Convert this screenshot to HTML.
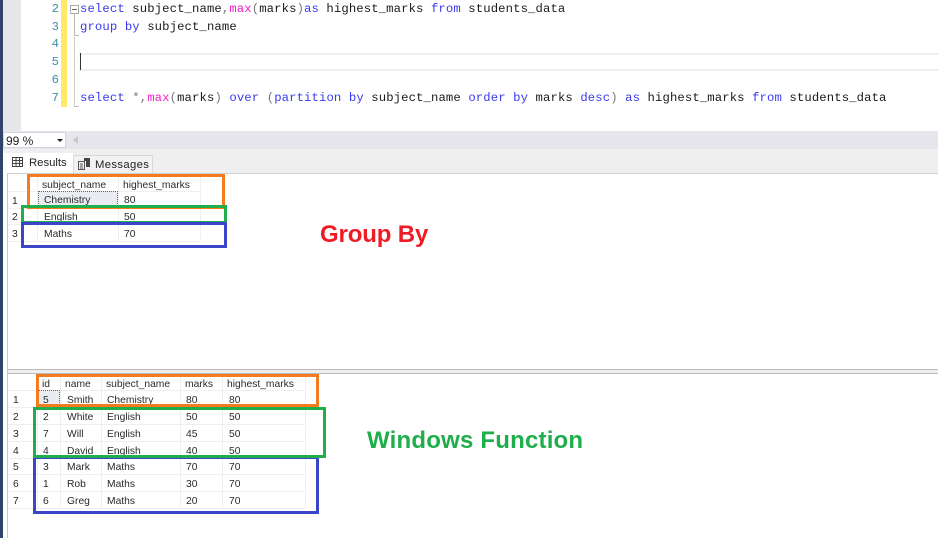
<!DOCTYPE html>
<html>
<head>
<meta charset="utf-8">
<style>
html,body{margin:0;padding:0;background:#fff}
#p{position:relative;width:938px;height:538px;overflow:hidden;background:#fff;font-family:"Liberation Sans",sans-serif;color:#222;filter:blur(.3px)}
.a{position:absolute}
.c{position:absolute;left:80px;font:12.25px/18px "Liberation Mono",monospace;letter-spacing:.115px;color:#1a1a1a;white-space:pre}
.c b{font-weight:normal;color:#3a3aee}
.c i{font-style:normal;color:#f020c8}
.c u{text-decoration:none;color:#777}
.n{position:absolute;left:46px;width:13px;text-align:right;font:12.25px/18px "Liberation Mono",monospace;color:#3f8fa8}
.t{position:absolute;font-size:10.3px;line-height:14px;color:#2a2a2a;white-space:pre;margin-top:1px}
.l{position:absolute;background:#efefef}
.box{position:absolute;box-sizing:border-box;background:transparent}
</style>
</head>
<body>
<div id="p">
<!-- left chrome -->
<div class="a" style="left:3px;top:0;width:18px;height:131px;background:#e6e7e8"></div>
<div class="a" style="left:61px;top:0;width:6px;height:107px;background:#ffe96a"></div>

<!-- line numbers -->
<div class="n" style="top:0">2</div>
<div class="n" style="top:18px">3</div>
<div class="n" style="top:35px">4</div>
<div class="n" style="top:53px">5</div>
<div class="n" style="top:71px">6</div>
<div class="n" style="top:89px">7</div>

<!-- fold markers -->
<div class="a" style="left:70px;top:5px;width:7px;height:7px;border:1px solid #aaa;box-sizing:content-box"></div>
<div class="a" style="left:72px;top:9px;width:5px;height:1px;background:#666"></div>
<div class="a" style="left:74px;top:14px;width:1px;height:21px;background:#bbb"></div>
<div class="a" style="left:74px;top:35px;width:5px;height:1px;background:#bbb"></div>
<div class="a" style="left:74px;top:37px;width:1px;height:69px;background:#ccc"></div>
<div class="a" style="left:74px;top:106px;width:5px;height:1px;background:#bbb"></div>

<!-- current line -->
<div class="a" style="left:79px;top:53px;width:859px;height:2px;background:#eeeef2"></div>
<div class="a" style="left:79px;top:69px;width:859px;height:2px;background:#eeeef2"></div>
<div class="a" style="left:80px;top:53px;width:1px;height:17px;background:#333"></div>

<!-- code -->
<div class="c" style="top:0"><b>select</b> subject_name<u>,</u><i>max</i><u>(</u>marks<u>)</u><b>as</b> highest_marks <b>from</b> students_data</div>
<div class="c" style="top:18px"><b>group</b> <b>by</b> subject_name</div>
<div class="c" style="top:89px"><b>select</b> <u>*,</u><i>max</i><u>(</u>marks<u>)</u> <b>over</b> <u>(</u><b>partition</b> <b>by</b> subject_name <b>order</b> <b>by</b> marks <b>desc</b><u>)</u> <b>as</b> highest_marks <b>from</b> students_data</div>

<!-- zoom bar -->
<div class="a" style="left:3px;top:131px;width:935px;height:18px;background:#e6e6ec"></div>
<div class="a" style="left:3px;top:132px;width:63px;height:16px;background:#fff;border:1px solid #d4d4dc;box-sizing:border-box"></div>
<div class="a" style="left:6px;top:133px;font-size:12px;line-height:16px;color:#222">99 %</div>
<div class="a" style="left:57px;top:139px;width:0;height:0;border-left:3px solid transparent;border-right:3px solid transparent;border-top:3px solid #222"></div>
<div class="a" style="left:73px;top:136px;width:0;height:0;border-top:4px solid transparent;border-bottom:4px solid transparent;border-right:5px solid #c8c8cc"></div>

<!-- tabs band -->
<div class="a" style="left:3px;top:149px;width:935px;height:24px;background:#efefef"></div>
<div class="a" style="left:3px;top:153px;width:70px;height:21px;background:#fff"></div>
<div class="a" style="left:3px;top:174px;width:4px;height:364px;background:#fff"></div>
<div class="a" style="left:73px;top:155px;width:80px;height:18px;background:#f2f2f2;border:1px solid #d8d8d8;border-bottom:none;box-sizing:border-box"></div>
<svg class="a" style="left:12px;top:156px" width="12" height="12" viewBox="0 0 12 12"><path d="M.5 1.5h10v9H.5zM.5 4.5h10M.5 7.5h10M4 1.5v9M7.5 1.5v9" fill="none" stroke="#444" stroke-width="1"/></svg>
<div class="a" style="left:29px;top:155px;font-size:11.3px;line-height:16px;color:#222">Results</div>
<svg class="a" style="left:78px;top:157px" width="13" height="13" viewBox="0 0 13 13"><path d="M.5 4.5h6v8h-6zM2 7h3M2 9h3M2 11h3" fill="none" stroke="#555"/><path d="M6 1h6v9H8V4H6z" fill="#444"/></svg>
<div class="a" style="left:95px;top:157px;font-size:11.3px;line-height:16px;letter-spacing:.35px;color:#222">Messages</div>

<!-- pane frames -->
<div class="a" style="left:7px;top:173px;width:931px;height:1px;background:#cfcfcf"></div>
<div class="a" style="left:7px;top:173px;width:1px;height:365px;background:#c8c8c8"></div>
<div class="a" style="left:7px;top:369px;width:931px;height:1px;background:#bbb"></div>
<div class="a" style="left:8px;top:370px;width:930px;height:3px;background:#eee"></div>
<div class="a" style="left:7px;top:373px;width:931px;height:1px;background:#bbb"></div>

<!-- grid 1 lines -->
<div class="l" style="left:8px;top:191px;width:192px;height:1px"></div>
<div class="l" style="left:8px;top:208px;width:192px;height:1px"></div>
<div class="l" style="left:8px;top:224px;width:192px;height:1px"></div>
<div class="l" style="left:8px;top:241px;width:192px;height:1px"></div>
<div class="l" style="left:37px;top:175px;width:1px;height:66px"></div>
<div class="l" style="left:118px;top:175px;width:1px;height:66px"></div>
<div class="l" style="left:200px;top:175px;width:1px;height:66px"></div>
<div class="a" style="left:38px;top:191px;width:80px;height:17px;background:#e9edf2;border:1px dotted #666;box-sizing:border-box"></div>

<div class="t" style="left:42px;top:178px">subject_name</div>
<div class="t" style="left:123px;top:178px">highest_marks</div>
<div class="t" style="left:12px;top:194px">1</div>
<div class="t" style="left:44px;top:193px">Chemistry</div>
<div class="t" style="left:124px;top:193px">80</div>
<div class="t" style="left:12px;top:210px">2</div>
<div class="t" style="left:44px;top:210px">English</div>
<div class="t" style="left:124px;top:210px">50</div>
<div class="t" style="left:12px;top:227px">3</div>
<div class="t" style="left:44px;top:227px">Maths</div>
<div class="t" style="left:124px;top:227px">70</div>

<!-- grid 1 boxes -->
<div class="box" style="left:27px;top:174px;width:198px;height:35px;border:3px solid #f47b20;border-bottom-width:1px"></div>
<div class="box" style="left:21px;top:205px;width:206px;height:19px;border:3px solid #1fae4b"></div>
<div class="box" style="left:21px;top:222px;width:206px;height:26px;border:3px solid #3a45c8"></div>

<div class="a" style="left:320px;top:220px;font:bold 24px/30px 'Liberation Sans',sans-serif;color:#ee1c25;letter-spacing:-.15px">Group By</div>

<!-- grid 2 lines -->
<div class="l" style="left:8px;top:390px;width:297px;height:1px"></div>
<div class="l" style="left:8px;top:407px;width:297px;height:1px"></div>
<div class="l" style="left:8px;top:424px;width:297px;height:1px"></div>
<div class="l" style="left:8px;top:441px;width:297px;height:1px"></div>
<div class="l" style="left:8px;top:458px;width:297px;height:1px"></div>
<div class="l" style="left:8px;top:474px;width:297px;height:1px"></div>
<div class="l" style="left:8px;top:491px;width:297px;height:1px"></div>
<div class="l" style="left:8px;top:508px;width:297px;height:1px"></div>
<div class="l" style="left:37px;top:376px;width:1px;height:132px"></div>
<div class="l" style="left:60px;top:376px;width:1px;height:132px"></div>
<div class="l" style="left:101px;top:376px;width:1px;height:132px"></div>
<div class="l" style="left:180px;top:376px;width:1px;height:132px"></div>
<div class="l" style="left:222px;top:376px;width:1px;height:132px"></div>
<div class="l" style="left:305px;top:376px;width:1px;height:132px"></div>
<div class="a" style="left:38px;top:390px;width:22px;height:17px;background:#e9edf2;border:1px dotted #666;box-sizing:border-box"></div>

<div class="t" style="left:42px;top:377px">id</div>
<div class="t" style="left:65px;top:377px">name</div>
<div class="t" style="left:106px;top:377px">subject_name</div>
<div class="t" style="left:185px;top:377px">marks</div>
<div class="t" style="left:227px;top:377px">highest_marks</div>

<div class="t" style="left:13px;top:393px">1</div>
<div class="t" style="left:43px;top:393px">5</div><div class="t" style="left:67px;top:393px">Smith</div><div class="t" style="left:107px;top:393px">Chemistry</div><div class="t" style="left:186px;top:393px">80</div><div class="t" style="left:229px;top:393px">80</div>

<div class="t" style="left:13px;top:410px">2</div>
<div class="t" style="left:43px;top:410px">2</div><div class="t" style="left:67px;top:410px">White</div><div class="t" style="left:107px;top:410px">English</div><div class="t" style="left:186px;top:410px">50</div><div class="t" style="left:229px;top:410px">50</div>

<div class="t" style="left:13px;top:427px">3</div>
<div class="t" style="left:43px;top:427px">7</div><div class="t" style="left:67px;top:427px">Will</div><div class="t" style="left:107px;top:427px">English</div><div class="t" style="left:186px;top:427px">45</div><div class="t" style="left:229px;top:427px">50</div>

<div class="t" style="left:13px;top:444px">4</div>
<div class="t" style="left:43px;top:444px">4</div><div class="t" style="left:67px;top:444px">David</div><div class="t" style="left:107px;top:444px">English</div><div class="t" style="left:186px;top:444px">40</div><div class="t" style="left:229px;top:444px">50</div>

<div class="t" style="left:13px;top:460px">5</div>
<div class="t" style="left:43px;top:460px">3</div><div class="t" style="left:67px;top:460px">Mark</div><div class="t" style="left:107px;top:460px">Maths</div><div class="t" style="left:186px;top:460px">70</div><div class="t" style="left:229px;top:460px">70</div>

<div class="t" style="left:13px;top:477px">6</div>
<div class="t" style="left:43px;top:477px">1</div><div class="t" style="left:67px;top:477px">Rob</div><div class="t" style="left:107px;top:477px">Maths</div><div class="t" style="left:186px;top:477px">30</div><div class="t" style="left:229px;top:477px">70</div>

<div class="t" style="left:13px;top:494px">7</div>
<div class="t" style="left:43px;top:494px">6</div><div class="t" style="left:67px;top:494px">Greg</div><div class="t" style="left:107px;top:494px">Maths</div><div class="t" style="left:186px;top:494px">20</div><div class="t" style="left:229px;top:494px">70</div>

<!-- grid 2 boxes -->
<div class="box" style="left:36px;top:374px;width:283px;height:33px;border:3px solid #f47b20"></div>
<div class="box" style="left:33px;top:456px;width:286px;height:58px;border:3px solid #3a45c8"></div>
<div class="box" style="left:33px;top:407px;width:293px;height:51px;border:3px solid #1fae4b"></div>

<div class="a" style="left:367px;top:426px;font:bold 24px/30px 'Liberation Sans',sans-serif;color:#1fae4b;letter-spacing:.2px">Windows Function</div>

<!-- left strip -->
<div class="a" style="left:0;top:0;width:3px;height:538px;background:#2e4468"></div>
</div>
</body>
</html>
